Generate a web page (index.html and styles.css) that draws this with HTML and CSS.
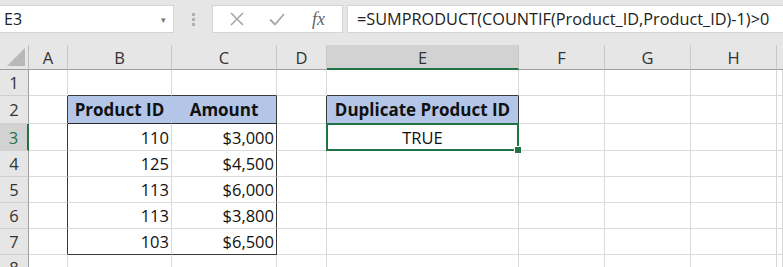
FILE: index.html
```html
<!DOCTYPE html>
<html>
<head>
<meta charset="utf-8">
<link rel="stylesheet" href="styles.css">
</head>
<body>
<div class="app">
  <div class="fbar">
    <div class="namebox"><span class="nb-text">E3</span><span class="nb-arrow">▾</span></div>
    <div class="sep"><i></i><i></i><i></i></div>
    <div class="btns">
      <svg class="ico" width="20" height="20" viewBox="0 0 20 20"><path d="M4 4 L16 16 M16 4 L4 16" stroke="#a6a6a6" stroke-width="1.6" fill="none"/></svg>
      <svg class="ico" width="20" height="20" viewBox="0 0 20 20"><path d="M3 10.5 L8 15.5 L17 5" stroke="#a6a6a6" stroke-width="1.8" fill="none"/></svg>
      <span class="fx">fx</span>
    </div>
    <div class="formula">=SUMPRODUCT(COUNTIF(Product_ID,Product_ID)-1)&gt;0</div>
  </div>
  <div class="sheet">
    <div class="corner"><span class="tri"></span></div>
    <div class="ch">A</div><div class="ch">B</div><div class="ch">C</div><div class="ch">D</div>
    <div class="ch ch-sel">E</div><div class="ch">F</div><div class="ch">G</div><div class="ch">H</div><div class="ch ch-end"></div>

    <div class="rh">1</div>
    <div class="c"></div><div class="c tb-b"></div><div class="c tb-b"></div><div class="c"></div><div class="c tb-b"></div><div class="c"></div><div class="c"></div><div class="c"></div><div class="c"></div>

    <div class="rh">2</div>
    <div class="c tb-r"></div><div class="c hd tb-b2 nob">Product ID</div><div class="c hd tb-r tb-b2">Amount</div><div class="c tb-r"></div><div class="c hd tb-r tb-b2">Duplicate Product ID</div><div class="c"></div><div class="c"></div><div class="c"></div><div class="c"></div>

    <div class="rh rh-sel">3</div>
    <div class="c tb-r"></div><div class="c num">110</div><div class="c num tb-r">$3,000</div><div class="c"></div><div class="c sel center">TRUE</div><div class="c"></div><div class="c"></div><div class="c"></div><div class="c"></div>

    <div class="rh">4</div>
    <div class="c tb-r"></div><div class="c num">125</div><div class="c num tb-r">$4,500</div><div class="c"></div><div class="c"></div><div class="c"></div><div class="c"></div><div class="c"></div><div class="c"></div>

    <div class="rh">5</div>
    <div class="c tb-r"></div><div class="c num">113</div><div class="c num tb-r">$6,000</div><div class="c"></div><div class="c"></div><div class="c"></div><div class="c"></div><div class="c"></div><div class="c"></div>

    <div class="rh">6</div>
    <div class="c tb-r"></div><div class="c num">113</div><div class="c num tb-r">$3,800</div><div class="c"></div><div class="c"></div><div class="c"></div><div class="c"></div><div class="c"></div><div class="c"></div>

    <div class="rh">7</div>
    <div class="c tb-r"></div><div class="c num tb-b">103</div><div class="c num tb-r tb-b">$6,500</div><div class="c"></div><div class="c"></div><div class="c"></div><div class="c"></div><div class="c"></div><div class="c"></div>

    <div class="rh">8</div>
    <div class="c"></div><div class="c"></div><div class="c"></div><div class="c"></div><div class="c"></div><div class="c"></div><div class="c"></div><div class="c"></div><div class="c"></div>
  </div>
</div>
</body>
</html>
```
FILE: styles.css
```css
* { box-sizing: border-box; }
html, body { margin: 0; padding: 0; }
body { width: 783px; height: 267px; overflow: hidden; background: #fff; font-family: "Open Sans", "Noto Sans", sans-serif; }

.app { display: flex; flex-direction: column; height: 267px; overflow: hidden; }

.fbar {
  flex: none; display: flex; align-items: flex-start; background: #e6e6e6;
  height: 45px; padding-top: 5px;
}
.namebox {
  width: 174px; height: 28px; background: #fff; border: 1px solid #d4d4d4; border-left: none;
  display: flex; align-items: center; justify-content: space-between; padding: 0 7px 0 4px;
  font-size: 16px; color: #222;
}
.nb-arrow { font-size: 9px; color: #777; }
.sep { width: 38px; height: 28px; display: flex; flex-direction: column; align-items: center; justify-content: center; gap: 2px; }
.sep i { display: block; width: 3px; height: 3px; background: #b0b0b0; }
.btns {
  width: 131px; height: 28px; background: #fff; border: 1px solid #d4d4d4;
  display: flex; align-items: center; padding-left: 14px; gap: 20px;
}
.fx { font-family: "Liberation Serif", serif; font-style: italic; font-size: 18px; color: #666; margin-left: 5px; }
.formula {
  flex: 1; margin-left: 4px; height: 28px; background: #fff; border: 1px solid #d4d4d4; border-right: none;
  font-size: 16.3px; color: #222; padding-left: 9px; line-height: 26px; white-space: nowrap; overflow: hidden;
}

.sheet {
  display: grid; flex: none; height: 236px;
  grid-template-columns: 29px 39px 104px 105px 50px 192px 86px 86px 86px 1fr;
  grid-template-rows: 25px 26px 28px 27px 26px 26px 26px 26px 26px;
  font-size: 16.5px; color: #111;
}
.corner { background: #e6e6e6; border-right: 1px solid #bdbdbd; border-bottom: 1px solid #9e9e9e; position: relative; }
.tri {
  position: absolute; right: 3px; bottom: 3px; width: 0; height: 0;
  border-left: 18px solid transparent; border-bottom: 18px solid #b8b8b8;
}
.ch {
  background: #e6e6e6; border-right: 1px solid #c8c8c8; border-bottom: 1px solid #9e9e9e;
  display: flex; align-items: center; justify-content: center; font-size: 16.5px; color: #333; padding-top: 1px;
}
.ch-end { border-right: none; }
.ch-sel { background: #d2d2d2; border-bottom: 2px solid #217346; }
.rh {
  background: #e6e6e6; border-right: 1px solid #9e9e9e; border-bottom: 1px solid #d0d0d0;
  display: flex; align-items: center; justify-content: center; font-size: 16.5px; color: #333;
}
.rh-sel { background: #d2d2d2; border-right: 2px solid #217346; color: #217346; }
.c {
  border-right: 1px solid #dadada; border-bottom: 1px solid #dadada;
  display: flex; align-items: center; padding: 0 2px; white-space: nowrap;
}
.num { justify-content: flex-end; }
.center { justify-content: center; }
.hd { background: #b4c6e7; font-weight: 700; justify-content: center; font-size: 17px; }
.nob { border-right-color: #b4c6e7; }
.tb-r { border-right: 1px solid #3a3a3a; }
.tb-b { border-bottom: 1px solid #3a3a3a; }
.tb-b2 { border-bottom: 1px solid #2a2a2a; }
.sel { position: relative; }
.sel::after {
  content: ""; position: absolute; left: -1px; top: -1px; right: -1px; bottom: -1px;
  border: 2px solid #217346;
}
.sel::before {
  content: ""; position: absolute; right: -4px; bottom: -4px; width: 6px; height: 6px;
  background: #217346; border: 1px solid #fff; z-index: 2;
}
```
